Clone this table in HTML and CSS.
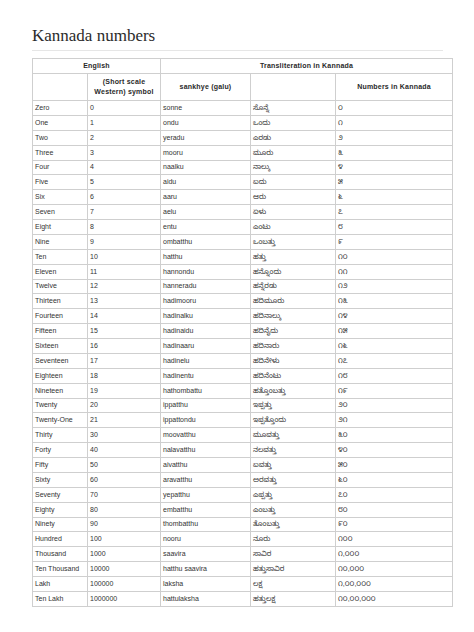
FILE: index.html
```html
<!DOCTYPE html>
<html>
<head>
<meta charset="utf-8">
<link rel="stylesheet" href="styles.css">
</head>
<body>
<div class="page">
  <h1 class="title">Kannada numbers</h1>
  <table class="nums">
    <colgroup>
      <col class="c1"><col class="c2"><col class="c3"><col class="c4"><col class="c5">
    </colgroup>
    <thead>
      <tr class="h1">
        <th colspan="2">English</th>
        <th colspan="3">Transliteration in Kannada</th>
      </tr>
      <tr class="h2">
        <th></th>
        <th>(Short scale<br>Western) symbol</th>
        <th>sankhye (galu)</th>
        <th></th>
        <th>Numbers in Kannada</th>
      </tr>
    </thead>
    <tbody>
      <tr><td>Zero</td><td>0</td><td>sonne</td><td>ಸೊನ್ನೆ</td><td>೦</td></tr>
      <tr><td>One</td><td>1</td><td>ondu</td><td>ಒಂದು</td><td>೧</td></tr>
      <tr><td>Two</td><td>2</td><td>yeradu</td><td>ಎರಡು</td><td>೨</td></tr>
      <tr><td>Three</td><td>3</td><td>mooru</td><td>ಮೂರು</td><td>೩</td></tr>
      <tr><td>Four</td><td>4</td><td>naalku</td><td>ನಾಲ್ಕು</td><td>೪</td></tr>
      <tr><td>Five</td><td>5</td><td>aidu</td><td>ಐದು</td><td>೫</td></tr>
      <tr><td>Six</td><td>6</td><td>aaru</td><td>ಆರು</td><td>೬</td></tr>
      <tr><td>Seven</td><td>7</td><td>aelu</td><td>ಏಳು</td><td>೭</td></tr>
      <tr><td>Eight</td><td>8</td><td>entu</td><td>ಎಂಟು</td><td>೮</td></tr>
      <tr><td>Nine</td><td>9</td><td>ombatthu</td><td>ಒಂಬತ್ತು</td><td>೯</td></tr>
      <tr><td>Ten</td><td>10</td><td>hatthu</td><td>ಹತ್ತು</td><td>೧೦</td></tr>
      <tr><td>Eleven</td><td>11</td><td>hannondu</td><td>ಹನ್ನೊಂದು</td><td>೧೧</td></tr>
      <tr><td>Twelve</td><td>12</td><td>hanneradu</td><td>ಹನ್ನೆರಡು</td><td>೧೨</td></tr>
      <tr><td>Thirteen</td><td>13</td><td>hadimooru</td><td>ಹದಿಮೂರು</td><td>೧೩</td></tr>
      <tr><td>Fourteen</td><td>14</td><td>hadinalku</td><td>ಹದಿನಾಲ್ಕು</td><td>೧೪</td></tr>
      <tr><td>Fifteen</td><td>15</td><td>hadinaidu</td><td>ಹದಿನೈದು</td><td>೧೫</td></tr>
      <tr><td>Sixteen</td><td>16</td><td>hadinaaru</td><td>ಹದಿನಾರು</td><td>೧೬</td></tr>
      <tr><td>Seventeen</td><td>17</td><td>hadinelu</td><td>ಹದಿನೇಳು</td><td>೧೭</td></tr>
      <tr><td>Eighteen</td><td>18</td><td>hadinentu</td><td>ಹದಿನೆಂಟು</td><td>೧೮</td></tr>
      <tr><td>Nineteen</td><td>19</td><td>hathombattu</td><td>ಹತ್ತೊಂಬತ್ತು</td><td>೧೯</td></tr>
      <tr><td>Twenty</td><td>20</td><td>ippatthu</td><td>ಇಪ್ಪತ್ತು</td><td>೨೦</td></tr>
      <tr><td>Twenty-One</td><td>21</td><td>ippattondu</td><td>ಇಪ್ಪತ್ತೊಂದು</td><td>೨೧</td></tr>
      <tr><td>Thirty</td><td>30</td><td>moovatthu</td><td>ಮೂವತ್ತು</td><td>೩೦</td></tr>
      <tr><td>Forty</td><td>40</td><td>nalavatthu</td><td>ನಲವತ್ತು</td><td>೪೦</td></tr>
      <tr><td>Fifty</td><td>50</td><td>aivatthu</td><td>ಐವತ್ತು</td><td>೫೦</td></tr>
      <tr><td>Sixty</td><td>60</td><td>aravatthu</td><td>ಅರವತ್ತು</td><td>೬೦</td></tr>
      <tr><td>Seventy</td><td>70</td><td>yepatthu</td><td>ಎಪ್ಪತ್ತು</td><td>೭೦</td></tr>
      <tr><td>Eighty</td><td>80</td><td>embatthu</td><td>ಎಂಬತ್ತು</td><td>೮೦</td></tr>
      <tr><td>Ninety</td><td>90</td><td>thombatthu</td><td>ತೊಂಬತ್ತು</td><td>೯೦</td></tr>
      <tr><td>Hundred</td><td>100</td><td>nooru</td><td>ನೂರು</td><td>೧೦೦</td></tr>
      <tr><td>Thousand</td><td>1000</td><td>saavira</td><td>ಸಾವಿರ</td><td>೧,೦೦೦</td></tr>
      <tr><td>Ten Thousand</td><td>10000</td><td>hatthu saavira</td><td>ಹತ್ತುಸಾವಿರ</td><td>೧೦,೦೦೦</td></tr>
      <tr><td>Lakh</td><td>100000</td><td>laksha</td><td>ಲಕ್ಷ</td><td>೧,೦೦,೦೦೦</td></tr>
      <tr><td>Ten Lakh</td><td>1000000</td><td>hattulaksha</td><td>ಹತ್ತುಲಕ್ಷ</td><td>೧೦,೦೦,೦೦೦</td></tr>
    </tbody>
  </table>
</div>
</body>
</html>
```

FILE: styles.css
```css
html, body {
  margin: 0;
  padding: 0;
  background: #ffffff;
}

.page {
  padding: 26px 22px 0 32px;
  display: flex;
  flex-direction: column;
  align-items: flex-start;
}

.title {
  margin: 0;
  width: 411px;
  font-family: "Liberation Serif", "DejaVu Serif", serif;
  font-weight: normal;
  font-size: 17px;
  line-height: 19px;
  color: #2b2b2b;
  padding-bottom: 5px;
  border-bottom: 1px solid #e6e6e6;
}

.nums {
  margin-top: 7px;
  width: 420px;
  border-collapse: collapse;
  table-layout: fixed;
  font-family: "Liberation Sans", Arial, "Noto Sans Kannada", "Noto Sans", sans-serif;
  font-size: 7px;
  color: #333333;
}

.c1 { width: 55px; }
.c2 { width: 73px; }
.c3 { width: 90px; }
.c4 { width: 85px; }
.c5 { width: 117px; }

.nums th,
.nums td {
  border: 1px solid #cfcfcf;
  padding: 0 2px;
  white-space: nowrap;
  overflow: hidden;
}

.nums th {
  font-weight: bold;
  text-align: center;
  color: #2a2a2a;
  letter-spacing: 0.2px;
  line-height: 10px;
}

.h1 { height: 15px; }
.h2 { height: 27px; }

.nums tbody tr { height: 14.88px; }

.nums td {
  text-align: left;
  line-height: 8px;
}
```
